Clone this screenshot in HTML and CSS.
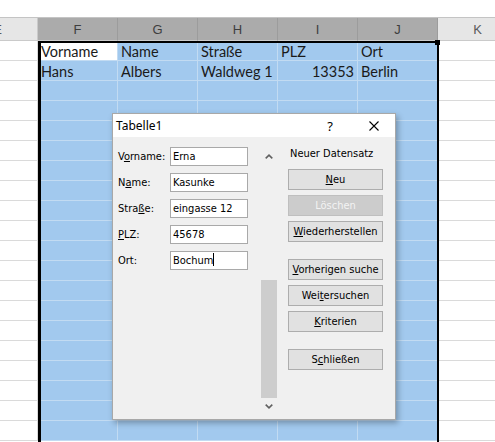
FILE: index.html
```html
<!DOCTYPE html>
<html lang="de">
<head>
    <meta charset="UTF-8">
    <title>Tabelle1 - Maske</title>
    <link rel="stylesheet" href="styles.css">
</head>
<body>
<div class="screen">
    <div class="topbar"></div>

    <div class="sheet" id="sheet">
        <div class="hd">E</div>
        <div class="hd sel">F</div>
        <div class="hd sel">G</div>
        <div class="hd sel">H</div>
        <div class="hd sel">I</div>
        <div class="hd sel">J</div>
        <div class="hd">K</div>

        <div class="c"></div>
        <div class="c s act">Vorname</div>
        <div class="c s">Name</div>
        <div class="c s">Straße</div>
        <div class="c s">PLZ</div>
        <div class="c s">Ort</div>
        <div class="c"></div>

        <div class="c"></div>
        <div class="c s">Hans</div>
        <div class="c s">Albers</div>
        <div class="c s">Waldweg 1</div>
        <div class="c s num">13353</div>
        <div class="c s">Berlin</div>
        <div class="c"></div>
    </div>

    <div class="selbox"></div>

    <div class="dialog">
        <div class="dlg-title">
            <span class="name">Tabelle1</span>
            <span class="help">?</span>
            <svg class="close" width="10" height="10" viewBox="0 0 10 10">
                <path d="M0.5 0.5 L9.5 9.5 M9.5 0.5 L0.5 9.5" stroke="#000" stroke-width="1.1" fill="none"/>
            </svg>
        </div>
        <div class="dlg-body">
            <div class="fields">
                <div class="field"><label>V<u>o</u>rname:</label><div class="box">Erna</div></div>
                <div class="field"><label>N<u>a</u>me:</label><div class="box">Kasunke</div></div>
                <div class="field"><label>Stra<u>ß</u>e:</label><div class="box">eingasse 12</div></div>
                <div class="field"><label><u>P</u>LZ:</label><div class="box">45678</div></div>
                <div class="field"><label>Ort:</label><div class="box">Bochum<span class="caret"></span></div></div>
            </div>

            <div class="scroll">
                <div class="arr up">
                    <svg width="8" height="5" viewBox="0 0 8 5"><path d="M0.7 4.3 L4 1.2 L7.3 4.3" stroke="#606060" stroke-width="1.6" fill="none"/></svg>
                </div>
                <div class="track"><div class="thumb"></div></div>
                <div class="arr down">
                    <svg width="8" height="5" viewBox="0 0 8 5"><path d="M0.7 0.7 L4 3.8 L7.3 0.7" stroke="#606060" stroke-width="1.6" fill="none"/></svg>
                </div>
            </div>

            <div class="side">
                <div class="rec">Neuer Datensatz</div>
                <button class="btn"><u>N</u>eu</button>
                <button class="btn dis">Löschen</button>
                <button class="btn"><u>W</u>iederherstellen</button>
                <button class="btn grp"><u>V</u>orherigen suche</button>
                <button class="btn">Wei<u>t</u>ersuchen</button>
                <button class="btn"><u>K</u>riterien</button>
                <button class="btn grp">S<u>c</u>hließen</button>
            </div>
        </div>
    </div>
</div>

    <script>
        // leere Zeilen auffuellen
        const sheet = document.getElementById('sheet');
        for (let r = 0; r < 18; r++) {
            for (let col = 0; col < 7; col++) {
                const cell = document.createElement('div');
                cell.className = (col === 0 || col === 6) ? 'c' : 'c s';
                sheet.appendChild(cell);
            }
        }
    </script>
</body>
</html>
```

FILE: styles.css
```css
body {
    margin: 0;
    background: white;
    font-family: Lato, "Liberation Sans", sans-serif;
}

.screen {
    position: relative;
    width: 495px;
    height: 442px;
    overflow: hidden;
}

.topbar {
    height: 17px;
    border-bottom: 1px solid #c4c4c4;
}

/* Tabelle */
.sheet {
    display: grid;
    grid-template-columns: repeat(7, 80px);
    grid-template-rows: 23px;
    grid-auto-rows: 20px;
    margin-left: -42px;
}

.hd {
    box-sizing: border-box;
    background: #e6e6e6;
    color: #5a5a5a;
    font-family: "Liberation Sans", sans-serif;
    font-size: 13px;
    line-height: 23px;
    text-align: center;
    border-right: 1px solid #cacaca;
    border-bottom: 1px solid #cacaca;
}

.hd.sel {
    background: #ababab;
    color: #3e3e3e;
    border-right-color: #9c9c9c;
}

.c {
    box-sizing: border-box;
    border-right: 1px solid #dadada;
    border-bottom: 1px solid #dadada;
    font-size: 14.5px;
    line-height: 21px;
    padding: 0 3px;
    white-space: nowrap;
    color: #1a1a1a;
}

.c.s {
    background: #a2c9ee;
    border-color: #c2dbf2;
}

.c.act {
    background: white;
}

.c.num {
    text-align: right;
}

.selbox {
    position: absolute;
    left: 38px;
    top: 41px;
    width: 401px;
    height: 420px;
    box-sizing: border-box;
    border: 2px solid black;
    border-left-width: 3px;
    pointer-events: none;
}

.selbox::after {
    content: '';
    position: absolute;
    right: -3px;
    top: -3px;
    width: 5px;
    height: 5px;
    background: black;
}

/* Maske */
.dialog {
    position: absolute;
    left: 112px;
    top: 113px;
    width: 284px;
    height: 307px;
    box-sizing: border-box;
    border: 1px solid #a8a8a8;
    background: #f0f0f0;
    box-shadow: 2px 3px 6px rgba(0, 0, 0, 0.3);
    font-family: "DejaVu Sans Condensed", "Liberation Sans", Arial, sans-serif;
    font-size: 11px;
    color: black;
}

.dlg-title {
    height: 23px;
    background: white;
    display: flex;
    align-items: center;
    padding: 0 16px 0 3px;
    font-family: "Noto Sans", sans-serif;
    font-size: 12px;
}

.dlg-title .name {
    flex: 1;
}

.help {
    font-size: 13px;
    margin-right: 36px;
}

.dlg-body {
    display: flex;
    padding: 10px 0 0 5px;
}

.fields {
    display: flex;
    flex-direction: column;
    gap: 7px;
}

.field {
    display: flex;
    align-items: center;
    height: 19px;
}

.field label {
    width: 52px;
}

.box {
    width: 78px;
    height: 19px;
    box-sizing: border-box;
    border: 1px solid #a9a9a9;
    background: white;
    padding-left: 2px;
    line-height: 17px;
    white-space: nowrap;
}

.caret {
    display: inline-block;
    width: 1px;
    height: 13px;
    background: black;
    vertical-align: -2px;
}

.scroll {
    margin-left: 13px;
    width: 16px;
    height: 267px;
    display: flex;
    flex-direction: column;
}

.arr {
    display: flex;
    align-items: center;
    justify-content: center;
}

.arr.up {
    height: 18px;
}

.arr.down {
    height: 16px;
}

.track {
    flex: 1;
    display: flex;
    flex-direction: column;
    justify-content: flex-end;
}

.thumb {
    height: 118px;
    background: #cdcdcd;
}

.side {
    margin-left: 11px;
    width: 95px;
    display: flex;
    flex-direction: column;
}

.rec {
    height: 14px;
    line-height: 14px;
    padding-left: 2px;
    margin-bottom: 8px;
}

.btn {
    height: 21px;
    box-sizing: border-box;
    border: 1px solid #adadad;
    background: #e1e1e1;
    font-family: inherit;
    font-size: 11px;
    color: black;
    padding: 0;
    margin: 0 0 5px 0;
    text-align: center;
}

.btn.dis {
    background: #cccccc;
    border-color: #bfbfbf;
    color: #f3f3f3;
}

.btn.grp {
    margin-top: 12px;
}
```
